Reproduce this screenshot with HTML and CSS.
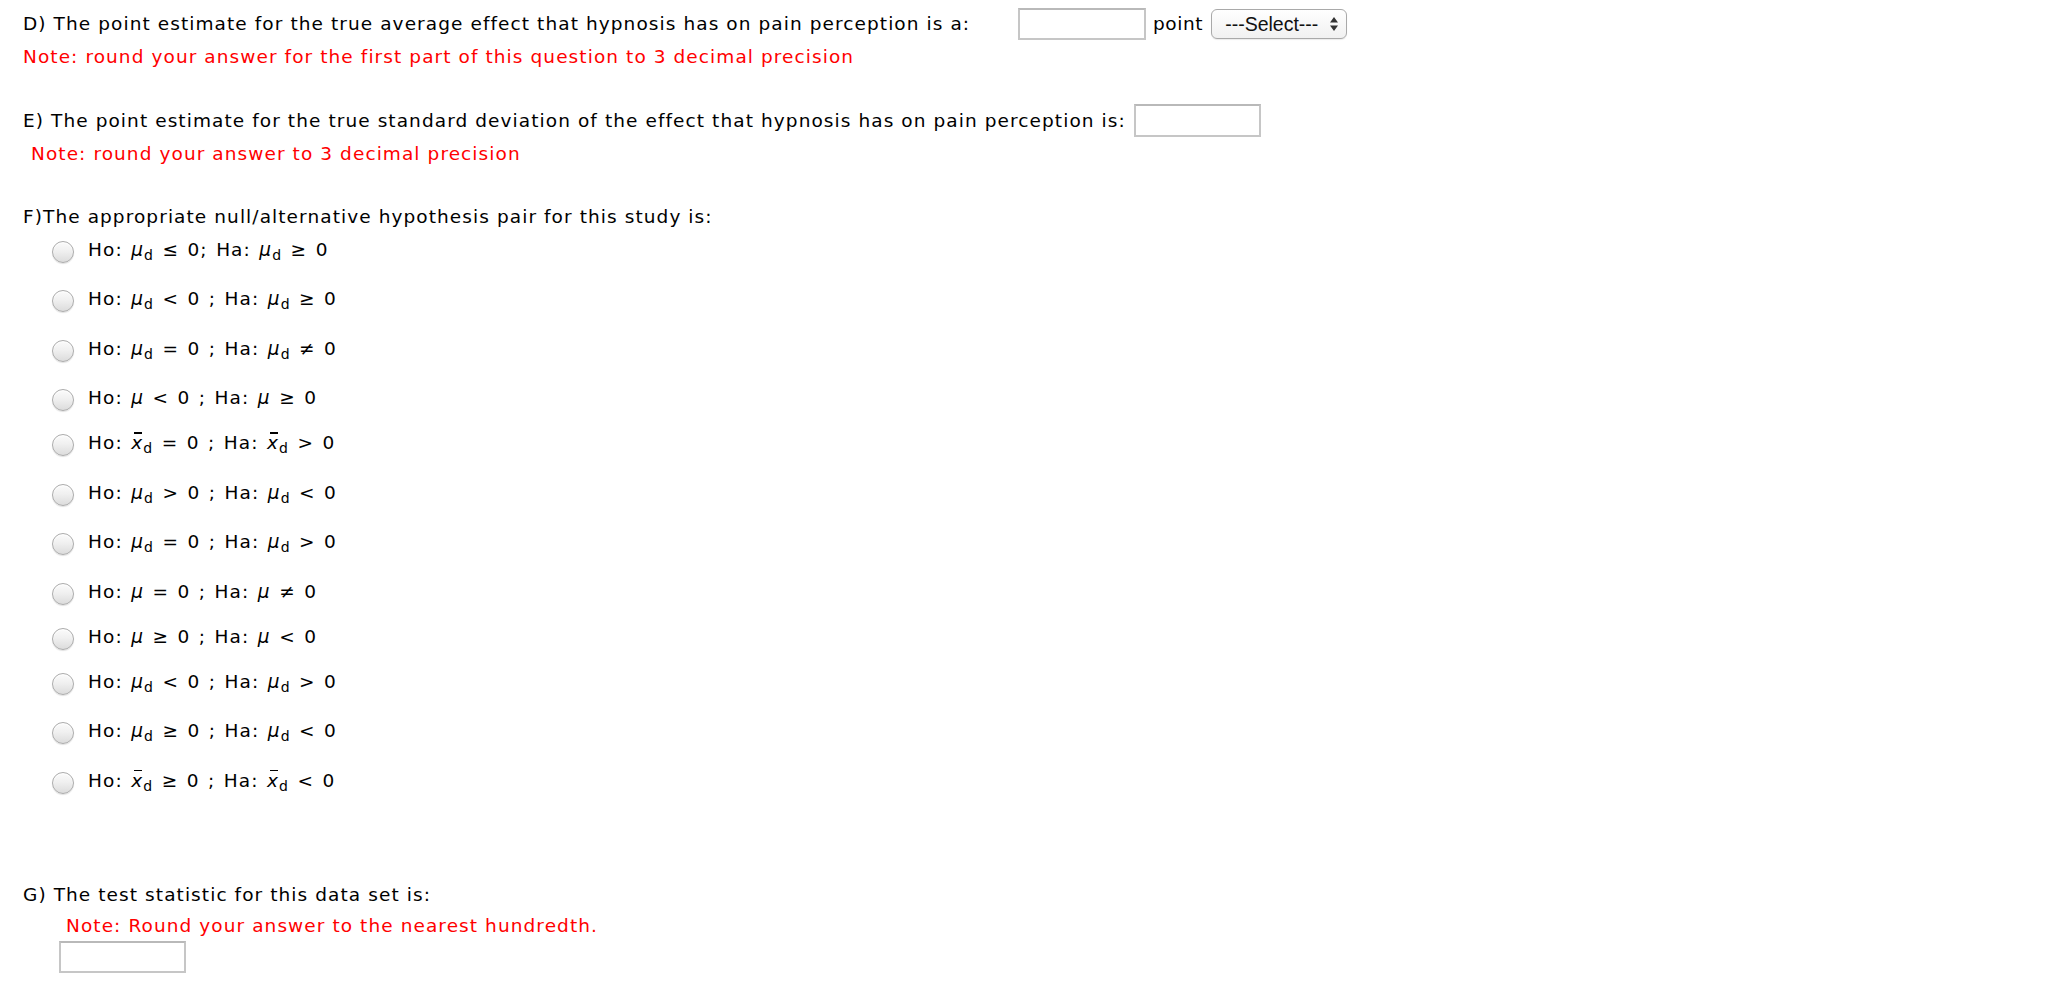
FILE: index.html
```html
<!DOCTYPE html>
<html lang="en">
<head>
<meta charset="utf-8">
<title>Hypothesis test questions</title>
<link rel="stylesheet" href="styles.css">
</head>
<body>
<div class="question">
  <div class="answer-row q-d">
    <span class="prompt prompt-d">D) The point estimate for the true average effect that hypnosis has on pain perception is a:</span>
    <input class="answer" type="text">
    <span class="unit">point</span>
    <label class="select-wrap">
      <select class="select"><option>---Select---</option></select>
      <svg class="select-arrows" width="10" height="16" viewBox="0 0 10 16"><path d="M5 1 L9 6.5 L1 6.5 Z M5 15 L9 9.5 L1 9.5 Z" fill="#333"/></svg>
    </label>
  </div>
  <div class="note">Note: round your answer for the first part of this question to 3 decimal precision</div>
</div>

<div class="question q-e">
  <div class="answer-row">
    <span class="prompt">E) The point estimate for the true standard deviation of the effect that hypnosis has on pain perception is:</span>
    <input class="answer answer-e" type="text">
  </div>
  <div class="note note-indent">Note: round your answer to 3 decimal precision</div>
</div>

<div class="question q-f">
  <div class="prompt">F)The appropriate null/alternative hypothesis pair for this study is:</div>
  <div class="hyp-list">
    <label class="opt"><input type="radio" name="h"><span>Ho: <i>μ</i><sub>d</sub> ≤ 0; Ha: <i>μ</i><sub>d</sub> ≥ 0</span></label>
    <label class="opt"><input type="radio" name="h"><span>Ho: <i>μ</i><sub>d</sub> &lt; 0 ; Ha: <i>μ</i><sub>d</sub> ≥ 0</span></label>
    <label class="opt"><input type="radio" name="h"><span>Ho: <i>μ</i><sub>d</sub> = 0 ; Ha: <i>μ</i><sub>d</sub> ≠ 0</span></label>
    <label class="opt opt-short"><input type="radio" name="h"><span>Ho: <i>μ</i> &lt; 0 ; Ha: <i>μ</i> ≥ 0</span></label>
    <label class="opt"><input type="radio" name="h"><span>Ho: <i class="xbar">x</i><sub>d</sub> = 0 ; Ha: <i class="xbar">x</i><sub>d</sub> &gt; 0</span></label>
    <label class="opt"><input type="radio" name="h"><span>Ho: <i>μ</i><sub>d</sub> &gt; 0 ; Ha: <i>μ</i><sub>d</sub> &lt; 0</span></label>
    <label class="opt"><input type="radio" name="h"><span>Ho: <i>μ</i><sub>d</sub> = 0 ; Ha: <i>μ</i><sub>d</sub> &gt; 0</span></label>
    <label class="opt opt-short"><input type="radio" name="h"><span>Ho: <i>μ</i> = 0 ; Ha: <i>μ</i> ≠ 0</span></label>
    <label class="opt opt-short"><input type="radio" name="h"><span>Ho: <i>μ</i> ≥ 0 ; Ha: <i>μ</i> &lt; 0</span></label>
    <label class="opt"><input type="radio" name="h"><span>Ho: <i>μ</i><sub>d</sub> &lt; 0 ; Ha: <i>μ</i><sub>d</sub> &gt; 0</span></label>
    <label class="opt"><input type="radio" name="h"><span>Ho: <i>μ</i><sub>d</sub> ≥ 0 ; Ha: <i>μ</i><sub>d</sub> &lt; 0</span></label>
    <label class="opt"><input type="radio" name="h"><span>Ho: <i class="xbar">x</i><sub>d</sub> ≥ 0 ; Ha: <i class="xbar">x</i><sub>d</sub> &lt; 0</span></label>
  </div>
</div>

<div class="question q-g">
  <div class="prompt">G) The test statistic for this data set is:</div>
  <div class="note note-g">Note: Round your answer to the nearest hundredth.</div>
  <input class="answer answer-g" type="text">
</div>
</body>
</html>
```

FILE: styles.css
```css
html, body {
  background: #ffffff;
}

body {
  margin: 0;
  padding: 8px 0 0 23px;
  font-family: "DejaVu Sans", Verdana, sans-serif;
  font-size: 18.5px;
  letter-spacing: 1.08px;
  line-height: 22px;
  color: #000000;
}

.answer-row {
  display: flex;
  align-items: center;
  gap: 7px;
  height: 32px;
}

.prompt-d {
  flex: 0 0 988px;
}

.answer-row .prompt {
  white-space: nowrap;
}

.answer {
  box-sizing: border-box;
  width: 128px;
  height: 32px;
  margin: 0;
  padding: 2px 4px;
  border: 2px solid #c6c6c6;
  border-top-color: #b9b9b9;
  background: #ffffff;
  font: inherit;
  outline: none;
}

.unit {
  white-space: nowrap;
  letter-spacing: 0.6px;
}

.select-wrap {
  display: inline-flex;
  align-items: center;
  box-sizing: border-box;
  height: 30px;
  width: 136px;
  margin-left: 1px;
  padding: 0 7px 0 13px;
  border: 1px solid #a9a9a9;
  border-radius: 6px;
  background: linear-gradient(#ffffff, #f1f1f1);
  box-shadow: 0 1px 1px rgba(0, 0, 0, 0.08);
}

.select {
  appearance: none;
  -webkit-appearance: none;
  flex: 1;
  min-width: 0;
  border: 0;
  margin: 0;
  padding: 0;
  background: transparent;
  font-family: "Liberation Sans", Arial, sans-serif;
  font-size: 19.5px;
  letter-spacing: 0;
  color: #111111;
  outline: none;
}

.select-arrows {
  flex: 0 0 auto;
}

.note {
  color: #ff0000;
  margin-top: 6px;
  white-space: nowrap;
}

.note-indent {
  padding-left: 8px;
}

.q-e {
  margin-top: 36px;
}

.q-e .answer-row {
  gap: 8px;
  height: 33px;
}

.answer-e {
  height: 33px;
  width: 127px;
}

.q-f {
  margin-top: 41px;
}

.hyp-list {
  margin-top: 10.5px;
  padding-left: 29px;
}

.opt {
  display: flex;
  align-items: flex-start;
  height: 49.5px;
  white-space: nowrap;
  word-spacing: 1.5px;
}

.opt-short {
  height: 45px;
}

.opt input[type="radio"] {
  appearance: none;
  -webkit-appearance: none;
  box-sizing: border-box;
  width: 22px;
  height: 22px;
  margin: 2px 14px 0 0;
  border: 1px solid #acacac;
  border-radius: 50%;
  background: linear-gradient(#fbfbfb 0%, #f0f0f0 45%, #dcdcdc 100%);
  box-shadow: inset 0 1px 1px rgba(255, 255, 255, 0.9), 0 1px 1px rgba(0, 0, 0, 0.12);
  flex: 0 0 auto;
}

.opt i {
  font-style: italic;
}

.opt sub {
  font-size: 14px;
  line-height: 0;
  vertical-align: -4px;
}

.xbar {
  position: relative;
  display: inline-block;
}

.xbar::before {
  content: "";
  position: absolute;
  left: 3px;
  top: 0px;
  width: 8px;
  height: 1.5px;
  background: #000000;
}

.q-g {
  margin-top: 64.5px;
}

.note-g {
  margin-top: 9.5px;
  padding-left: 43px;
}

.answer-g {
  display: block;
  margin: 4px 0 0 36px;
  width: 127px;
}
```
